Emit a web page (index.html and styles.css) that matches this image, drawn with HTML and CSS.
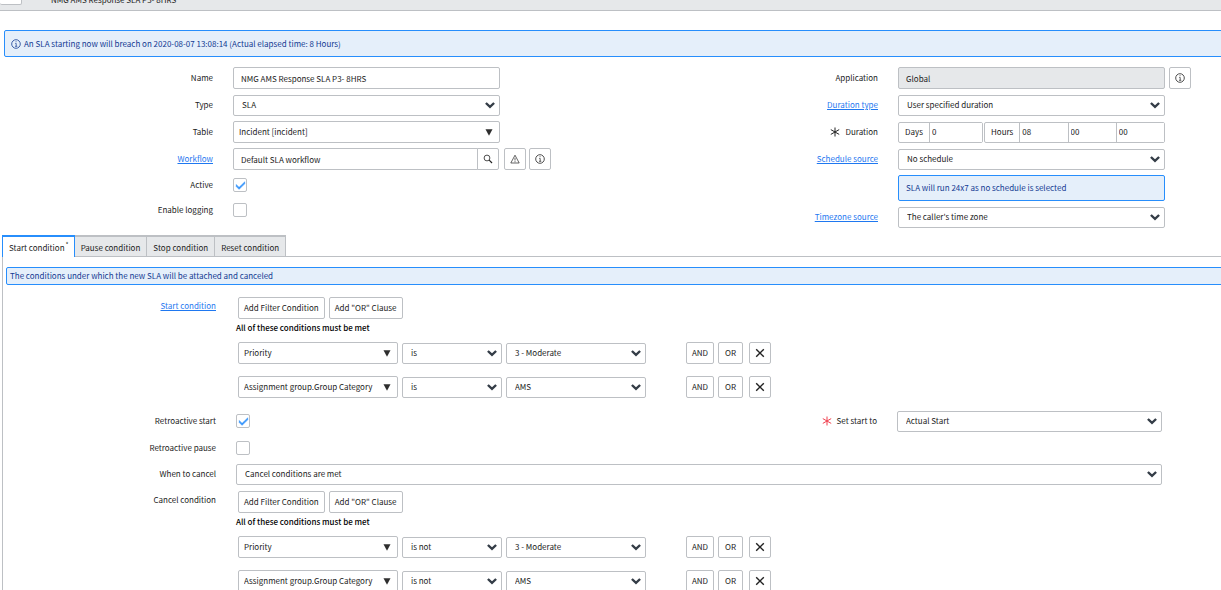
FILE: index.html
```html
<!DOCTYPE html>
<html lang="en">
  <head>
    <title>SLA Definition</title>
    <meta charset="UTF-8">
    <link rel="stylesheet" href="styles.css">
  </head>

  <body>
    <!-- Shared icons -->
    <svg class="sprite" aria-hidden="true">
      <symbol id="chevron" viewBox="0 0 10 7"><path d="M0.9 1 L5 4.9 L9.1 1" fill="none" stroke="#343d47" stroke-width="2.4"/></symbol>
      <symbol id="triangle" viewBox="0 0 10 7"><path d="M1.5 0.3 H8.5 L5 6.8 Z" fill="#2e2e2e"/></symbol>
      <symbol id="info" viewBox="0 0 10 10"><circle cx="5" cy="5" r="4.3" fill="none" stroke="currentColor" stroke-width="0.8"/><path d="M4.2 4.4 H5.2 V7.3 M4 7.3 H6.3 M4.6 2.7 H5.5" fill="none" stroke="currentColor" stroke-width="0.7"/></symbol>
      <symbol id="warning" viewBox="0 0 10 10"><path d="M5 1.2 L9.2 9 H0.8 Z M5 3.8 V6.5 M5 7.2 V8.2" fill="none" stroke="currentColor" stroke-width="0.7"/></symbol>
      <symbol id="search" viewBox="0 0 10 10"><circle cx="4" cy="4" r="2.9" fill="none" stroke="currentColor" stroke-width="0.8"/><path d="M6.2 6.2 L9 9" stroke="currentColor" stroke-width="1.2"/></symbol>
      <symbol id="cross" viewBox="0 0 10 10"><path d="M1.2 1.2 L8.8 8.8 M8.8 1.2 L1.2 8.8" stroke="currentColor" stroke-width="1.4"/></symbol>
      <symbol id="asterisk" viewBox="0 0 10 10"><path d="M5 0.5 V9.5 M0.8 2.6 L9.2 7.4 M9.2 2.6 L0.8 7.4" stroke="currentColor"/></symbol>
    </svg>

    <div class="page">
      <header class="header">
        <button class="back" type="button" aria-label="Back"></button>
        <span class="title">NMG AMS Response SLA P3- 8HRS</span>
      </header>

      <div class="message breach"><svg class="icon"><use href="#info"/></svg>An SLA starting now will breach on 2020-08-07 13:08:14 (Actual elapsed time: 8 Hours)</div>

      <form class="columns">
        <div class="column left">
          <div class="field">
            <label for="name">Name</label>
            <input class="control" id="name" type="text" value="NMG AMS Response SLA P3- 8HRS">
          </div>
          <div class="field">
            <label for="type">Type</label>
            <div class="select"><select id="type"><option>SLA</option></select><svg><use href="#chevron"/></svg></div>
          </div>
          <div class="field">
            <label for="table">Table</label>
            <div class="select tree"><select id="table"><option>Incident [incident]</option></select><svg><use href="#triangle"/></svg></div>
          </div>
          <div class="field">
            <a class="label" href="#workflow">Workflow</a>
            <div class="reference">
              <input class="control" id="workflow" type="text" aria-label="Workflow" value="Default SLA workflow">
              <button class="button square" type="button" aria-label="Look up"><svg class="icon"><use href="#search"/></svg></button>
            </div>
            <div class="addons">
              <button class="button square" type="button" aria-label="Warning"><svg class="icon"><use href="#warning"/></svg></button>
              <button class="button square" type="button" aria-label="Preview"><svg class="icon"><use href="#info"/></svg></button>
            </div>
          </div>
          <div class="field check">
            <label for="active">Active</label>
            <input id="active" type="checkbox" checked>
          </div>
          <div class="field check">
            <label for="logging">Enable logging</label>
            <input id="logging" type="checkbox">
          </div>
        </div>

        <div class="column right">
          <div class="field">
            <label for="application">Application</label>
            <input class="control" id="application" type="text" value="Global" readonly>
            <div class="addons">
              <button class="button square" type="button" aria-label="Preview"><svg class="icon"><use href="#info"/></svg></button>
            </div>
          </div>
          <div class="field">
            <a class="label" href="#durationType">Duration type</a>
            <div class="select"><select id="durationType" aria-label="Duration type"><option>User specified duration</option></select><svg><use href="#chevron"/></svg></div>
          </div>
          <div class="field">
            <label for="days"><svg class="icon"><use href="#asterisk"/></svg>Duration</label>
            <div class="duration">
              <div class="days"><span>Days</span><input id="days" type="text" value="0"></div>
              <div class="hours"><span>Hours</span><input type="text" aria-label="Hours" value="08"><input type="text" aria-label="Minutes" value="00"><input type="text" aria-label="Seconds" value="00"></div>
            </div>
          </div>
          <div class="field">
            <a class="label" href="#schedule">Schedule source</a>
            <div class="select"><select id="schedule" aria-label="Schedule source"><option>No schedule</option></select><svg><use href="#chevron"/></svg></div>
          </div>
          <div class="field">
            <div class="message note">SLA will run 24x7 as no schedule is selected</div>
          </div>
          <div class="field">
            <a class="label" href="#timezone">Timezone source</a>
            <div class="select"><select id="timezone" aria-label="Timezone source"><option>The caller's time zone</option></select><svg><use href="#chevron"/></svg></div>
          </div>
        </div>
      </form>

      <nav class="tabs">
        <button class="tab active" type="button">Start condition<sup>*</sup></button>
        <button class="tab" type="button">Pause condition</button>
        <button class="tab" type="button">Stop condition</button>
        <button class="tab" type="button">Reset condition</button>
      </nav>

      <section class="panel">
        <div class="message hint">The conditions under which the new SLA will be attached and canceled</div>

        <div class="condition">
          <a class="label" href="#start">Start condition</a>
          <div class="builder" id="start">
            <div class="actions">
              <button class="button" type="button">Add Filter Condition</button>
              <button class="button" type="button">Add "OR" Clause</button>
            </div>
            <p>All of these conditions must be met</p>
            <div class="filter">
              <div class="select tree"><select aria-label="Field"><option>Priority</option></select><svg><use href="#triangle"/></svg></div>
              <div class="select"><select aria-label="Operator"><option>is</option></select><svg><use href="#chevron"/></svg></div>
              <div class="select"><select aria-label="Value"><option>3 - Moderate</option></select><svg><use href="#chevron"/></svg></div>
              <button class="button and" type="button">AND</button>
              <button class="button" type="button">OR</button>
              <button class="button square remove" type="button" aria-label="Remove"><svg class="icon"><use href="#cross"/></svg></button>
            </div>
            <div class="filter">
              <div class="select tree"><select aria-label="Field"><option>Assignment group.Group Category</option></select><svg><use href="#triangle"/></svg></div>
              <div class="select"><select aria-label="Operator"><option>is</option></select><svg><use href="#chevron"/></svg></div>
              <div class="select"><select aria-label="Value"><option>AMS</option></select><svg><use href="#chevron"/></svg></div>
              <button class="button and" type="button">AND</button>
              <button class="button" type="button">OR</button>
              <button class="button square remove" type="button" aria-label="Remove"><svg class="icon"><use href="#cross"/></svg></button>
            </div>
          </div>
        </div>

        <div class="columns">
          <div class="column left">
            <div class="field">
              <label for="retroStart">Retroactive start</label>
              <input id="retroStart" type="checkbox" checked>
            </div>
            <div class="field">
              <label for="retroPause">Retroactive pause</label>
              <input id="retroPause" type="checkbox">
            </div>
          </div>
          <div class="column right">
            <div class="field">
              <label for="setStart"><svg class="icon required"><use href="#asterisk"/></svg>Set start to</label>
              <div class="select"><select id="setStart"><option>Actual Start</option></select><svg><use href="#chevron"/></svg></div>
            </div>
          </div>
        </div>

        <div class="field wide">
          <label for="cancel">When to cancel</label>
          <div class="select"><select id="cancel"><option>Cancel conditions are met</option></select><svg><use href="#chevron"/></svg></div>
        </div>

        <div class="condition">
          <span class="label">Cancel condition</span>
          <div class="builder">
            <div class="actions">
              <button class="button" type="button">Add Filter Condition</button>
              <button class="button" type="button">Add "OR" Clause</button>
            </div>
            <p>All of these conditions must be met</p>
            <div class="filter">
              <div class="select tree"><select aria-label="Field"><option>Priority</option></select><svg><use href="#triangle"/></svg></div>
              <div class="select"><select aria-label="Operator"><option>is not</option></select><svg><use href="#chevron"/></svg></div>
              <div class="select"><select aria-label="Value"><option>3 - Moderate</option></select><svg><use href="#chevron"/></svg></div>
              <button class="button and" type="button">AND</button>
              <button class="button" type="button">OR</button>
              <button class="button square remove" type="button" aria-label="Remove"><svg class="icon"><use href="#cross"/></svg></button>
            </div>
            <div class="filter">
              <div class="select tree"><select aria-label="Field"><option>Assignment group.Group Category</option></select><svg><use href="#triangle"/></svg></div>
              <div class="select"><select aria-label="Operator"><option>is not</option></select><svg><use href="#chevron"/></svg></div>
              <div class="select"><select aria-label="Value"><option>AMS</option></select><svg><use href="#chevron"/></svg></div>
              <button class="button and" type="button">AND</button>
              <button class="button" type="button">OR</button>
              <button class="button square remove" type="button" aria-label="Remove"><svg class="icon"><use href="#cross"/></svg></button>
            </div>
          </div>
        </div>
      </section>
    </div>
  </body>
</html>
```
FILE: styles.css
```css
* { box-sizing: border-box; }
body {
  margin: 0;
  background-color: white;
  color: #222;
}
body, input, select, button {
  font-family: "Noto Sans CJK SC", "Noto Sans", sans-serif;
  font-size: 8px;
  font-weight: 400;
  line-height: 12px;
}
input, select, button {
  margin: 0;
  border: 1px solid #bdc0c4;
  border-radius: 2px;
  background-color: white;
  color: #222;
}
a { color: #1f78f0; }
p { margin: 0; }
.sprite { display: none; }
.icon {
  width: 10px;
  height: 10px;
  flex: none;
}
.required { color: #f0404f; }
.page {
  height: 100vh;
  overflow: hidden;
}

/* Header, scrolled almost out of view */
.header {
  display: flex;
  align-items: flex-end;
  gap: 29px;
  height: 11px;
  overflow: hidden;
  border-bottom: 1px solid #bdc0c4;
  background-color: #e6e8ea;
}
.back {
  width: 22px;
  height: 22px;
  flex: none;
  margin-bottom: 5px;
  border-left: 0;
}
.title { margin-bottom: 4px; }

.message {
  display: flex;
  align-items: center;
  border: 1px solid #278efc;
  border-radius: 2px;
  background-color: #e5effa;
  color: #123a92;
}
.breach {
  gap: 3px;
  height: 27px;
  margin: 19px -4px 10px 4px;
  padding-left: 6px;
}
.note {
  grid-column: 2;
  height: 26px;
  padding-left: 7px;
}
.hint {
  height: 18px;
  margin-right: -4px;
  margin-left: 3px;
  padding-left: 3px;
}

/* Form fields */
.columns {
  display: grid;
  grid-template-columns: 665fr 556fr;
}
.column {
  display: flex;
  flex-direction: column;
  gap: 5px;
}
.field {
  display: grid;
  column-gap: 20px;
  align-items: center;
  min-height: 22px;
}
.left .field { grid-template-columns: 213px 1fr 145px; }
.right .field { grid-template-columns: 213px 1fr 36px; }
.left .check { min-height: 20px; }
.field label, .label {
  display: flex;
  justify-content: flex-end;
  align-items: center;
  gap: 5px;
}
a.label { text-decoration: underline; }
.control {
  width: 100%;
  height: 22px;
  padding: 0 7px;
}
.control:read-only { background-color: #e6e8ea; }
.addons {
  display: flex;
  gap: 3px;
  margin-left: -16px;
}
.select {
  display: grid;
  align-items: center;
}
.select select, .select svg { grid-area: 1 / 1; }
.select select {
  width: 100%;
  height: 21px;
  padding: 0 20px 0 8px;
  appearance: none;
}
.select svg {
  width: 10px;
  height: 7px;
  justify-self: end;
  margin-right: 5px;
  pointer-events: none;
}
.tree select {
  height: 22px;
  padding-left: 5px;
}
.tree svg { margin-right: 6px; }
input[type=checkbox] {
  display: grid;
  place-items: center;
  width: 14px;
  height: 14px;
  appearance: none;
}
input[type=checkbox]:checked::before {
  content: "";
  width: 8px;
  height: 4px;
  margin-bottom: 3px;
  border-bottom: 1px solid #278efc;
  border-left: 1px solid #278efc;
  box-shadow: -1px 1px 0 #5ba6fb;
  transform: rotate(-45deg);
}
.button {
  display: flex;
  justify-content: center;
  align-items: center;
  height: 22px;
  padding: 0 5px;
}
.square {
  width: 22px;
  flex: none;
  padding: 0;
}
.reference {
  display: flex;
  padding-right: 1px;
}
.reference .control { border-radius: 2px 0 0 2px; }
.reference .button {
  margin-left: -1px;
  border-radius: 0 2px 2px 0;
}
.duration {
  display: grid;
  grid-template-columns: 85fr 181fr;
  gap: 1px;
}
.days, .hours {
  display: flex;
  height: 21px;
  border: 1px solid #bdc0c4;
  border-radius: 2px;
}
.days span, .hours span {
  align-self: center;
  padding: 0 6px;
}
.duration input {
  flex: 1;
  width: 0;
  padding: 0 2px;
  border-width: 0 0 0 1px;
  border-radius: 0;
}

/* Tabs */
.tabs {
  display: flex;
  margin: 7px 0 -1px 2px;
}
.tab {
  height: 22px;
  padding: 2px 6px 0;
  border-width: 2px 1px 1px 0;
  border-radius: 0;
  background-color: #e6e8ea;
}
.tab.active {
  padding: 2px 5px 0 6px;
  border-width: 2px 1px 0;
  border-color: #278efc;
  background-color: white;
}
.tab sup {
  margin-left: 1px;
  line-height: 0;
}
.panel {
  margin-left: 2px;
  padding-top: 10px;
  border-top: 1px solid #bdc0c4;
  border-left: 1px solid #bdc0c4;
}
.panel .columns { grid-template-columns: 661fr 557fr; }
.panel .right .field,
.panel .wide { grid-template-columns: 213px 1fr 39px; }
.panel .wide { margin: 4px 0 6px; }

/* Condition builder */
.condition {
  display: grid;
  grid-template-columns: 213px 1fr;
  column-gap: 22px;
  align-items: start;
}
.condition > .label { padding-top: 3px; }
.hint + .condition { margin: 12px 0; }
.actions {
  display: flex;
  gap: 4px;
}
.builder p {
  margin: 3px 0 8px -2px;
  color: black;
  font-weight: 500;
}
.filter {
  display: grid;
  grid-template-columns: 160px 100px 140px 32px 28px 25px 24px;
  column-gap: 4px;
  align-items: center;
}
.filter + .filter { margin-top: 12px; }
.and { grid-column: 5; }
.remove { justify-self: end; }
```
